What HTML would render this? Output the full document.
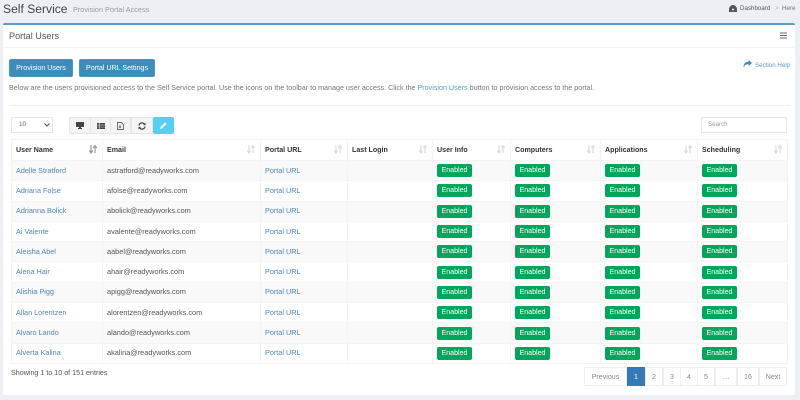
<!DOCTYPE html>
<html lang="en">
<head>
<meta charset="utf-8">
<title>Self Service</title>
<style>
*{box-sizing:border-box}
html,body{margin:0;padding:0;width:800px;height:400px;overflow:hidden;background:#ecf0f5}
body{font-family:"Liberation Sans",sans-serif;font-size:7.3px;color:#555;position:relative;filter:blur(.3px)}
.a{position:absolute;white-space:nowrap}
a{color:#4f86b5;text-decoration:none}
#box{position:absolute;left:3px;top:23px;width:792px;height:372px;background:#fff;border-top:2px solid #5b9bc8;border-radius:2px}
.btn{position:absolute;top:59px;height:18px;line-height:17px;background:#3c8dbc;border:1px solid #4a97c4;border-radius:2px;color:#fff;text-align:center;font-size:7.1px}
.tb{position:absolute;top:117px;height:17px;width:21px;background:#f4f4f4;border:1px solid #e6e6e6;display:flex;align-items:center;justify-content:center}
table{position:absolute;left:11px;top:139px;width:776px;border-collapse:collapse;table-layout:fixed}
th,td{border:1px solid #f4f4f4;padding:0 0 1px 4px;text-align:left;overflow:hidden;white-space:nowrap}
th{height:21px;font-size:7.1px;color:#333;font-weight:bold;position:relative}
td{height:20.3px;font-size:7.35px;color:#555}
tbody td a{font-size:7.25px}
tbody tr:nth-child(odd) td{background:#f9f9f9}
th i{position:absolute;right:5px;top:5px;width:8px;height:10px}
.b{display:block;width:35px;height:13px;line-height:12.5px;background:#00a65a;color:#fff;border-radius:2px;text-align:center;font-size:7.1px;font-weight:normal;position:relative;top:.5px}
.p{position:absolute;top:367px;height:19px;line-height:18px;background:#fff;border:1px solid #eee;margin-left:-1px;text-align:center;color:#888;font-size:7.1px}
</style>
</head>
<body>
<div class="a" style="left:3px;top:0;font-size:12.1px;line-height:18px;color:#444">Self Service</div>
<div class="a" style="left:73px;top:4px;font-size:7.3px;line-height:11px;color:#999">Provision Portal Access</div>
<svg class="a" style="left:729px;top:5px" width="8" height="7" viewBox="0 0 8 7"><path d="M0 7V4.500C0 2 1.800 0 4 0s4 2 4 4.500V7z" fill="#555"/><circle cx="4" cy="4.500" r="1" fill="#ecf0f5"/></svg>
<div class="a" style="left:740px;top:4px;font-size:6.2px;line-height:10px;color:#555">Dashboard</div>
<div class="a" style="left:775px;top:4px;font-size:6.2px;line-height:10px;color:#aaa">&gt;</div>
<div class="a" style="left:782px;top:4px;font-size:6.2px;line-height:10px;color:#777">Here</div>

<div id="box"></div>
<div class="a" style="left:9px;top:30px;font-size:9.1px;line-height:13px;color:#555">Portal Users</div>
<svg class="a" style="left:780px;top:32px" width="7" height="7" viewBox="0 0 7 7"><path d="M0 1h7M0 3.500h7M0 6h7" stroke="#667" stroke-width="1.100"/></svg>
<div class="a" style="left:4px;top:47px;width:790px;height:1px;background:#f4f4f4"></div>

<div class="btn" style="left:9px;width:64px">Provision Users</div>
<div class="btn" style="left:79px;width:76px">Portal URL Settings</div>
<svg class="a" style="left:743px;top:60px" width="9" height="8" viewBox="0 0 9 8"><path d="M5.500 0L9 3 5.500 6V4.200C3 4.200 1.500 5 .6 7.500 .4 4 2 1.900 5.500 1.800z" fill="#3c8dbc"/></svg>
<a class="a" style="left:755px;top:59.500px;font-size:6.2px;line-height:11px;color:#5b9bc8">Section Help</a>
<div class="a" style="left:9px;top:83px;font-size:7.17px;line-height:11px;color:#777">Below are the users provisioned access to the Self Service portal. Use the icons on the toolbar to manage user access. Click the <a style="color:#5b9bc8">Provision Users</a> button to provision access to the portal.</div>
<div class="a" style="left:9px;top:105px;width:781px;height:1px;background:#f0f0f0"></div>

<div class="a" style="left:11px;top:117px;width:42px;height:16px;border:1px solid #e3e6ec;background:#fff;font-size:6.4px;line-height:14px;padding-left:7px;color:#666">10</div>
<svg class="a" style="left:44px;top:123px" width="6" height="4" viewBox="0 0 6 4"><path d="M.5.5L3 3 5.500.5" fill="none" stroke="#555" stroke-width="1.100"/></svg>

<div class="tb" style="left:69px;width:22px;border-radius:2px 0 0 2px"><svg width="8" height="7" viewBox="0 0 8 7"><path d="M0 0h8v5H5v1h1v1H2V6h1V5H0z" fill="#444"/></svg></div>
<div class="tb" style="left:90px"><svg width="8" height="6" viewBox="0 0 8 6"><path d="M0 0h2.500v1.700H0zM3 0h5v1.700H3zM0 2.200h2.500v1.700H0zM3 2.200h5v1.700H3zM0 4.300h2.500V6H0zM3 4.300h5V6H3z" fill="#444"/></svg></div>
<div class="tb" style="left:110px"><svg width="7" height="8" viewBox="0 0 7 8"><path d="M.5.5h4l2 2v5h-6z" fill="none" stroke="#666" stroke-width=".9"/><path d="M2 3.500l2 2.500M4 3.500L2 6" stroke="#666" stroke-width=".8"/></svg></div>
<div class="tb" style="left:131px;width:22px"><svg width="8" height="8" viewBox="0 0 8 8"><path d="M1 3.500A3 3 0 0 1 6.300 2M7 4.500A3 3 0 0 1 1.700 6" fill="none" stroke="#444" stroke-width="1.200"/><path d="M7.500.5v2.600H5zM.5 7.500V4.900H3z" fill="#444"/></svg></div>
<div class="a" style="left:153px;top:117px;width:21px;height:17px;background:#55d0f0;border-radius:2px"><svg style="position:absolute;left:7px;top:5px" width="7" height="7" viewBox="0 0 7 7"><path d="M0 7l.6-2.200L5 .4 6.600 2 2.200 6.400z" fill="#fff"/></svg></div>

<div class="a" style="left:701px;top:117px;width:86px;height:16px;border:1px solid #e3e6ec;background:#fff;font-size:6.2px;line-height:14px;padding-left:6px;color:#999">Search</div>

<table>
<colgroup><col style="width:91px"><col style="width:158px"><col style="width:87px"><col style="width:85px"><col style="width:78px"><col style="width:90px"><col style="width:97px"><col style="width:90px"></colgroup>
<thead><tr>
<th>User Name<i><svg width="8" height="10" viewBox="0 0 8 10"><path d="M2 0v7M.3 5.500L2 8l1.700-2.500M6 8V1M4.300 3L6 .5 7.700 3" fill="none" stroke="#999" stroke-width="1.200"/></svg></i></th>
<th>Email<i><svg width="8" height="10" viewBox="0 0 8 10"><path d="M2 0v7M.3 5.500L2 8l1.700-2.500M6 8V1M4.300 3L6 .5 7.700 3" fill="none" stroke="#ddd" stroke-width="1.200"/></svg></i></th>
<th>Portal URL<i><svg width="8" height="10" viewBox="0 0 8 10"><path d="M2 0v7M.3 5.500L2 8l1.700-2.500M6 8V1M4.300 3L6 .5 7.700 3" fill="none" stroke="#ddd" stroke-width="1.200"/></svg></i></th>
<th>Last Login<i><svg width="8" height="10" viewBox="0 0 8 10"><path d="M2 0v7M.3 5.500L2 8l1.700-2.500M6 8V1M4.300 3L6 .5 7.700 3" fill="none" stroke="#ddd" stroke-width="1.200"/></svg></i></th>
<th>User Info<i><svg width="8" height="10" viewBox="0 0 8 10"><path d="M2 0v7M.3 5.500L2 8l1.700-2.500M6 8V1M4.300 3L6 .5 7.700 3" fill="none" stroke="#ddd" stroke-width="1.200"/></svg></i></th>
<th>Computers<i><svg width="8" height="10" viewBox="0 0 8 10"><path d="M2 0v7M.3 5.500L2 8l1.700-2.500M6 8V1M4.300 3L6 .5 7.700 3" fill="none" stroke="#ddd" stroke-width="1.200"/></svg></i></th>
<th>Applications<i><svg width="8" height="10" viewBox="0 0 8 10"><path d="M2 0v7M.3 5.500L2 8l1.700-2.500M6 8V1M4.300 3L6 .5 7.700 3" fill="none" stroke="#ddd" stroke-width="1.200"/></svg></i></th>
<th>Scheduling<i><svg width="8" height="10" viewBox="0 0 8 10"><path d="M2 0v7M.3 5.500L2 8l1.700-2.500M6 8V1M4.300 3L6 .5 7.700 3" fill="none" stroke="#ddd" stroke-width="1.200"/></svg></i></th>
</tr></thead>
<tbody>
<tr><td><a>Adelle Stratford</a></td><td>astratford@readyworks.com</td><td><a>Portal URL</a></td><td></td><td><span class="b">Enabled</span></td><td><span class="b">Enabled</span></td><td><span class="b">Enabled</span></td><td><span class="b">Enabled</span></td></tr>
<tr><td><a>Adriana Folse</a></td><td>afolse@readyworks.com</td><td><a>Portal URL</a></td><td></td><td><span class="b">Enabled</span></td><td><span class="b">Enabled</span></td><td><span class="b">Enabled</span></td><td><span class="b">Enabled</span></td></tr>
<tr><td><a>Adrianna Bolick</a></td><td>abolick@readyworks.com</td><td><a>Portal URL</a></td><td></td><td><span class="b">Enabled</span></td><td><span class="b">Enabled</span></td><td><span class="b">Enabled</span></td><td><span class="b">Enabled</span></td></tr>
<tr><td><a>Ai Valente</a></td><td>avalente@readyworks.com</td><td><a>Portal URL</a></td><td></td><td><span class="b">Enabled</span></td><td><span class="b">Enabled</span></td><td><span class="b">Enabled</span></td><td><span class="b">Enabled</span></td></tr>
<tr><td><a>Aleisha Abel</a></td><td>aabel@readyworks.com</td><td><a>Portal URL</a></td><td></td><td><span class="b">Enabled</span></td><td><span class="b">Enabled</span></td><td><span class="b">Enabled</span></td><td><span class="b">Enabled</span></td></tr>
<tr><td><a>Alena Hair</a></td><td>ahair@readyworks.com</td><td><a>Portal URL</a></td><td></td><td><span class="b">Enabled</span></td><td><span class="b">Enabled</span></td><td><span class="b">Enabled</span></td><td><span class="b">Enabled</span></td></tr>
<tr><td><a>Alishia Pigg</a></td><td>apigg@readyworks.com</td><td><a>Portal URL</a></td><td></td><td><span class="b">Enabled</span></td><td><span class="b">Enabled</span></td><td><span class="b">Enabled</span></td><td><span class="b">Enabled</span></td></tr>
<tr><td><a>Allan Lorentzen</a></td><td>alorentzen@readyworks.com</td><td><a>Portal URL</a></td><td></td><td><span class="b">Enabled</span></td><td><span class="b">Enabled</span></td><td><span class="b">Enabled</span></td><td><span class="b">Enabled</span></td></tr>
<tr><td><a>Alvaro Lando</a></td><td>alando@readyworks.com</td><td><a>Portal URL</a></td><td></td><td><span class="b">Enabled</span></td><td><span class="b">Enabled</span></td><td><span class="b">Enabled</span></td><td><span class="b">Enabled</span></td></tr>
<tr><td><a>Alverta Kalina</a></td><td>akalina@readyworks.com</td><td><a>Portal URL</a></td><td></td><td><span class="b">Enabled</span></td><td><span class="b">Enabled</span></td><td><span class="b">Enabled</span></td><td><span class="b">Enabled</span></td></tr>
</tbody>
</table>

<div class="a" style="left:11px;top:367.500px;font-size:7.15px;line-height:11px;color:#555">Showing 1 to 10 of 151 entries</div>

<div class="p" style="left:585px;width:43px;border-radius:2px 0 0 2px">Previous</div>
<div class="p" style="left:628px;width:18px;background:#337ab7;border-color:#337ab7;color:#fff">1</div>
<div class="p" style="left:646px;width:18px">2</div>
<div class="p" style="left:664px;width:18px">3</div>
<div class="p" style="left:681px;width:18px">4</div>
<div class="p" style="left:698px;width:18px">5</div>
<div class="p" style="left:716px;width:22px">…</div>
<div class="p" style="left:738px;width:22px">16</div>
<div class="p" style="left:760px;width:28px;border-radius:0 2px 2px 0">Next</div>
</body>
</html>
